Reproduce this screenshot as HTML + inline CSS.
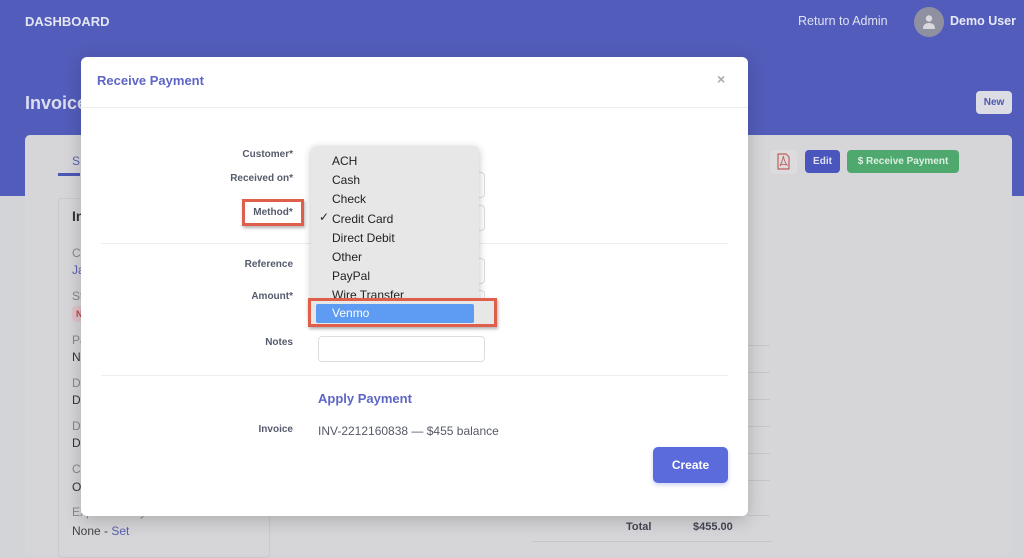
<!DOCTYPE html>
<html><head><meta charset="utf-8"><style>
*{box-sizing:border-box;margin:0;padding:0}
body{width:1024px;height:548px;overflow:hidden;position:relative;background:#d3d4d7;font-family:"Liberation Sans",sans-serif}
.abs{position:absolute}
.lp{position:absolute;left:72px;font-size:12px;color:#888}
.lv{position:absolute;left:72px;font-size:12px;color:#333}
</style></head><body>
<div class="abs" style="left:0;top:0;width:1024px;height:196px;background:#525dbb"></div>
<div class="abs" style="left:25px;top:14px;color:#e4e6f4;font-weight:bold;font-size:13px">DASHBOARD</div>
<div class="abs" style="left:798px;top:14px;color:#dfe1f2;font-size:12.5px">Return to Admin</div>
<div class="abs" style="left:914px;top:7px;width:30px;height:30px;border-radius:50%;background:#8f90a0"></div>
<svg class="abs" style="left:922px;top:14px" width="14" height="16" viewBox="0 0 14 16"><circle cx="7" cy="4.5" r="3.2" fill="#d8d8dd"/><path d="M1 15 Q1 9 7 9 Q13 9 13 15Z" fill="#d8d8dd"/></svg>
<div class="abs" style="left:950px;top:14px;color:#e8e9f5;font-weight:bold;font-size:12.5px">Demo User</div>
<div class="abs" style="left:25px;top:93px;color:#dcdef0;font-weight:bold;font-size:18px">Invoice</div>
<div class="abs" style="left:976px;top:91px;width:36px;height:23px;border-radius:4px;background:#dcdce4;color:#4c56b0;font-weight:bold;font-size:10px;text-align:center;line-height:23px">New</div>
<!-- card -->
<div class="abs" style="left:25px;top:135px;width:987px;height:420px;background:#d6d6d9;border-radius:5px"></div>
<div class="abs" style="left:58px;top:173px;width:22px;height:3px;background:#4d57b4"></div>
<div class="abs" style="left:72px;top:154px;color:#5c64ad;font-size:12px">S</div>
<div class="abs" style="left:58px;top:198px;width:212px;height:360px;border:1px solid #c9c9cd;border-radius:4px"></div>
<div class="abs" style="left:72px;top:208px;font-size:14px;font-weight:bold;color:#333">In</div>
<div class="lp" style="top:246px">Co</div>
<div class="lv" style="top:263px;color:#5860b0">Ja</div>
<div class="lp" style="top:289px">St</div>
<div class="abs" style="left:72px;top:306px;width:20px;height:16px;border-radius:4px;background:#e2c4c8;color:#c0444c;font-size:9px;font-weight:bold;padding:3px 4px">N</div>
<div class="lp" style="top:333px">Pa</div>
<div class="lv" style="top:350px">N</div>
<div class="lp" style="top:376px">Da</div>
<div class="lv" style="top:393px">De</div>
<div class="lp" style="top:419px">Du</div>
<div class="lv" style="top:436px">De</div>
<div class="lp" style="top:462px">Cl</div>
<div class="lv" style="top:480px">O</div>
<div class="lp" style="top:505px">Expected Payment Date:</div>
<div class="lv" style="top:524px;color:#444">None - <span style="color:#5860b0">Set</span></div>
<div class="abs" style="left:770px;top:150px;width:27px;height:24px;border-radius:4px;background:#dcdcdf"></div>
<svg class="abs" style="left:777px;top:153px" width="13" height="17" viewBox="0 0 13 17"><path d="M1 1h8l3 3v12H1z" fill="none" stroke="#c0605c" stroke-width="1.2"/><path d="M3 13 Q6 6 6.5 3 Q7 8 10 12 Q5 10 3 13z" fill="none" stroke="#c0605c" stroke-width="0.9"/></svg>
<div class="abs" style="left:805px;top:150px;width:35px;height:23px;border-radius:4px;background:#4a55bd;color:#dfe1f3;font-weight:bold;font-size:10px;text-align:center;line-height:23px">Edit</div>
<div class="abs" style="left:847px;top:150px;width:112px;height:23px;border-radius:4px;background:#4fa96e;color:#dcefe2;font-weight:bold;font-size:10px;text-align:center;line-height:23px">$ Receive Payment</div>
<div class="abs" style="left:748px;top:345px;width:22px;height:1px;background:#c6c6ca;box-shadow:0 27px 0 #c6c6ca,0 54px 0 #c6c6ca,0 81px 0 #c6c6ca,0 108px 0 #c6c6ca,0 135px 0 #c6c6ca,0 170px 0 #c6c6ca"></div>
<div class="abs" style="left:626px;top:521px;font-size:11px;font-weight:bold;color:#454654">Total</div>
<div class="abs" style="left:693px;top:521px;font-size:11px;font-weight:bold;color:#454654">$455.00</div>
<div class="abs" style="left:532px;top:541px;width:240px;height:1px;background:#c6c6ca"></div>
<!-- modal -->
<div class="abs" style="left:81px;top:57px;width:667px;height:459px;background:#fff;border-radius:6px;box-shadow:0 4px 18px rgba(0,0,0,.2)"></div>
<div class="abs" style="left:97px;top:73px;color:#5d66c6;font-weight:bold;font-size:13px">Receive Payment</div>
<div class="abs" style="left:717px;top:71px;color:#aaa;font-weight:bold;font-size:14px">×</div>
<div class="abs" style="left:81px;top:107px;width:667px;height:1px;background:#eee"></div>
<div class="abs" style="left:101px;top:243px;width:627px;height:1px;background:#eee"></div>
<div class="abs" style="left:101px;top:375px;width:627px;height:1px;background:#eee"></div>
<div class="abs" style="font-size:10px;font-weight:bold;color:#555b6b;text-align:right;width:120px;left:173px;top:149px">Customer*</div>
<div class="abs" style="font-size:10px;font-weight:bold;color:#555b6b;text-align:right;width:120px;left:173px;top:173px">Received on*</div>
<div class="abs" style="font-size:10px;font-weight:bold;color:#555b6b;text-align:right;width:120px;left:173px;top:259px">Reference</div>
<div class="abs" style="font-size:10px;font-weight:bold;color:#555b6b;text-align:right;width:120px;left:173px;top:291px">Amount*</div>
<div class="abs" style="font-size:10px;font-weight:bold;color:#555b6b;text-align:right;width:120px;left:173px;top:337px">Notes</div>
<div class="abs" style="font-size:10px;font-weight:bold;color:#555b6b;text-align:right;width:120px;left:173px;top:424px">Invoice</div>
<div class="abs" style="left:242px;top:199px;width:62px;height:27px;border:3px solid #df5f4a;box-shadow:1px 2px 3px rgba(0,0,0,.3);font-size:10px;font-weight:bold;color:#555b6b;text-align:center;line-height:21px">Method*</div>
<div class="abs" style="left:318px;top:172px;width:167px;height:26px;border:1px solid #ddd;border-radius:4px"></div>
<div class="abs" style="left:318px;top:205px;width:167px;height:26px;border:1px solid #ddd;border-radius:4px"></div>
<div class="abs" style="left:318px;top:258px;width:167px;height:26px;border:1px solid #ddd;border-radius:4px"></div>
<div class="abs" style="left:318px;top:290px;width:167px;height:26px;border:1px solid #ddd;border-radius:4px"></div>
<div class="abs" style="left:318px;top:336px;width:167px;height:26px;border:1px solid #ddd;border-radius:4px"></div>
<div class="abs" style="left:318px;top:391px;color:#5d66c6;font-weight:bold;font-size:13px">Apply Payment</div>
<div class="abs" style="left:318px;top:424px;color:#555a66;font-size:12px">INV-2212160838 — $455 balance</div>
<div class="abs" style="left:653px;top:447px;width:75px;height:36px;border-radius:5px;background:#5c6bdc;color:#fff;font-weight:bold;font-size:12px;text-align:center;line-height:36px;box-shadow:0 2px 5px rgba(92,107,220,.3)">Create</div>
<!-- dropdown -->
<div class="abs" style="left:311px;top:146px;width:168px;height:174px;background:#e7e7e7;border-radius:5px;box-shadow:0 2px 8px rgba(0,0,0,.25);font-size:12px;color:#222">
<div style="position:absolute;left:21px;top:6px;line-height:19.2px">ACH<br>Cash<br>Check<br>Credit Card<br>Direct Debit<br>Other<br>PayPal<br>Wire Transfer</div>
<div style="position:absolute;left:8px;top:64px">✓</div>
</div>
<div class="abs" style="left:308px;top:298px;width:189px;height:29px;border:3px solid #df5f4a;background:#e7e7e7;box-shadow:1px 2px 3px rgba(0,0,0,.3)"></div>
<div class="abs" style="left:316px;top:304px;width:158px;height:19px;background:#5e9bf3;border-radius:2px;color:#fff;font-size:12px;padding-left:16px;line-height:19px">Venmo</div>
</body></html>
